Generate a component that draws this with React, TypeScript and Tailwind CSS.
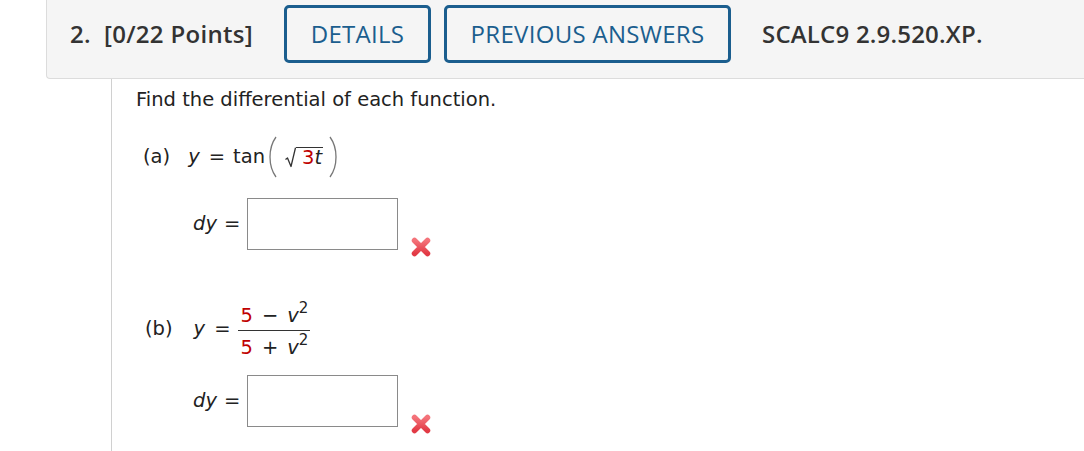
import React from "react";

function RedX() {
  return (
    <svg width="22" height="20" viewBox="0 0 22 20" className="block">
      <defs>
        <linearGradient id="xg" x1="0" y1="0" x2="0" y2="1">
          <stop offset="0" stopColor="#f4737a" />
          <stop offset="1" stopColor="#e23a45" />
        </linearGradient>
      </defs>
      <path d="M4.5 3.5 L17.5 16.5 M17.5 3.5 L4.5 16.5" stroke="url(#xg)" strokeWidth="5.5" strokeLinecap="round" fill="none" />
    </svg>
  );
}

function Paren({ right }: { right?: boolean }) {
  return (
    <svg width="14" height="42" viewBox="0 0 14 42" className="block">
      <path
        d={right ? "M4 1 C12 12 12 30 4 41" : "M10 1 C2 12 2 30 10 41"}
        stroke="#777"
        strokeWidth="1.3"
        fill="none"
      />
    </svg>
  );
}

const math = { fontFamily: '"DejaVu Sans", Verdana, sans-serif' } as const;

function DyRow({ xTop }: { xTop: string }) {
  return (
    <div className="flex items-start">
      <div className="h-[52px] flex items-center ml-[57px]">
        <span className="italic">dy</span>
        <span className="ml-[7px]">=</span>
      </div>
      <div className="ml-[7px] w-[151px] h-[52px] border border-[#8a8a8a] bg-white" />
      <div className={"ml-[12px] " + xTop}><RedX /></div>
    </div>
  );
}

export default function App() {
  return (
    <div className="w-[1084px] h-[451px] bg-white overflow-hidden" style={{ fontFamily: '"Open Sans", sans-serif' }}>
      <div className="ml-[46px] h-[79px] bg-[#f5f5f5] border-l border-b border-[#dcdcdc] rounded-bl-[4px] flex items-start pt-[5px]">
        <div className="ml-[23px] w-[214px] h-[58px] flex items-center text-[24px] font-semibold text-[#333] whitespace-pre tracking-[0.3px]">
          2.  [0/22 Points]
        </div>
        <div className="w-[147px] h-[58px] border-[3px] border-[#1b5e8e] rounded-[5px] flex items-center justify-center text-[24px] text-[#1b5e8e] tracking-[0.3px]">
          DETAILS
        </div>
        <div className="ml-[13px] w-[287px] h-[58px] border-[3px] border-[#1b5e8e] rounded-[5px] flex items-center justify-center text-[24px] text-[#1b5e8e] tracking-[0.3px]">
          PREVIOUS ANSWERS
        </div>
        <div className="ml-[31px] h-[58px] flex items-center text-[24px] font-semibold text-[#333] tracking-[0.2px]">
          SCALC9 2.9.520.XP.
        </div>
      </div>
      <div className="ml-[111px] border-l border-[#d0d0d0] h-[372px] pl-[24px] text-[#222] text-[19.5px]" style={math}>
        <div className="pt-[9px] leading-[24px]">Find the differential of each function.</div>
        <div className="mt-[23px] flex items-center h-[44px]">
          <span className="ml-[7px]">(a)</span>
          <span className="ml-[18px] italic">y</span>
          <span className="ml-[9px]">=</span>
          <span className="ml-[8px]">tan</span>
          <span className="ml-[1px]"><Paren /></span>
          <span className="ml-[5px] flex items-start">
            <svg width="11" height="21" viewBox="0 0 11 21" className="block">
              <path d="M0.5 12.5 L2.5 11 L6 19.5 L10.5 0.75" stroke="#333" strokeWidth="1.3" fill="none" strokeLinejoin="round" />
            </svg>
            <span className="border-t-[1.3px] border-[#333] text-[#c00000] leading-[20px] pl-[6px] pr-[1px]">3<span className="italic text-[#222]">t</span></span>
          </span>
          <span className="ml-[3px]"><Paren right /></span>
        </div>
        <div className="mt-[19px]">
          <DyRow xTop="mt-[39px]" />
        </div>
        <div className="mt-[37px] flex items-center h-[70px]">
          <span className="ml-[9px]">(b)</span>
          <span className="ml-[21px] italic">y</span>
          <span className="ml-[9px]">=</span>
          <div className="ml-[7px] flex flex-col items-center">
            <div className="px-[3px] h-[27px] flex items-end leading-[22px]"><span className="text-[#c00000]">5</span><span className="ml-[9px]">−</span><span className="ml-[9px] italic">v</span><span className="text-[15px] leading-none self-start mt-[1px]">2</span></div>
            <div className="w-[72px] h-px bg-[#333] mt-[3px]" />
            <div className="px-[3px] h-[27px] flex items-end leading-[22px] mt-[1px]"><span className="text-[#c00000]">5</span><span className="ml-[9px]">+</span><span className="ml-[9px] italic">v</span><span className="text-[15px] leading-none self-start mt-[1px]">2</span></div>
          </div>
        </div>
        <div className="mt-[11px]">
          <DyRow xTop="mt-[39px]" />
        </div>
      </div>
    </div>
  );
}
